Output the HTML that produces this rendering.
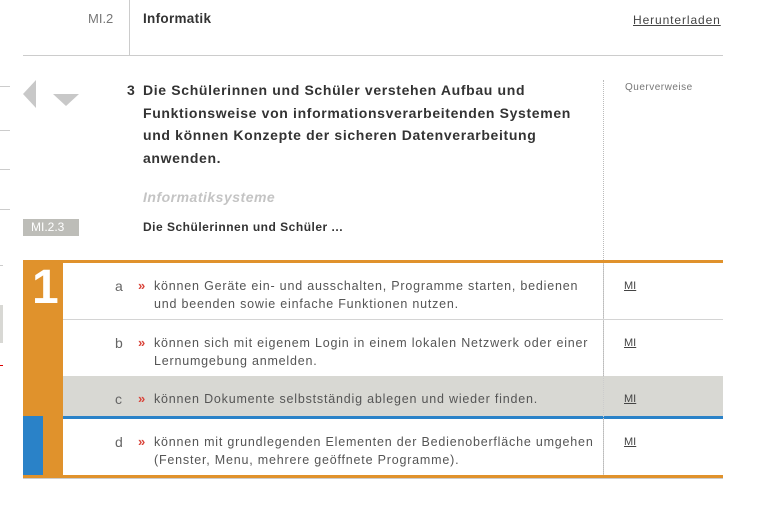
<!DOCTYPE html>
<html><head><meta charset="utf-8"><style>
*{margin:0;padding:0;box-sizing:border-box}
body{width:781px;height:521px;background:#fff;position:relative;overflow:hidden;font-family:"Liberation Sans",sans-serif;color:#333}
.a{position:absolute}
.item{position:absolute;left:63px;width:660px;font-size:12.5px;color:#555;letter-spacing:0.8px;line-height:18px}
.item .l{position:absolute;left:52px;top:14px;font-size:14px;color:#666}
.item .r{position:absolute;left:75px;top:14px;color:#d9443a;font-weight:bold;font-size:13px}
.item .t{position:absolute;left:91px;top:14px;white-space:nowrap}
.item .m{position:absolute;left:561px;top:14px;font-size:11px;text-decoration:underline;color:#444;letter-spacing:0}
</style></head><body>
<div class="a" style="left:88px;top:11px;font-size:13px;color:#777">MI.2</div>
<div class="a" style="left:129px;top:0;width:1px;height:55px;background:#ccc"></div>
<div class="a" style="left:143px;top:11px;font-size:13.5px;font-weight:bold;color:#333;letter-spacing:0.3px">Informatik</div>
<div class="a" style="left:633px;top:13px;font-size:12px;color:#444;text-decoration:underline;letter-spacing:0.9px">Herunterladen</div>
<div class="a" style="left:23px;top:55px;width:700px;height:1px;background:#ccc"></div>
<div class="a" style="left:0;top:86px;width:10px;height:1px;background:#ccc"></div>
<div class="a" style="left:0;top:130px;width:10px;height:1px;background:#ccc"></div>
<div class="a" style="left:0;top:169px;width:10px;height:1px;background:#ccc"></div>
<div class="a" style="left:0;top:209px;width:10px;height:1px;background:#ccc"></div>
<div class="a" style="left:0;top:265px;width:3px;height:1px;background:#ccc"></div>
<div class="a" style="left:0;top:305px;width:3px;height:38px;background:#d8d8d4"></div>
<div class="a" style="left:0;top:365px;width:3px;height:1px;background:#d00"></div>
<svg class="a" style="left:23px;top:80px" width="60" height="30"><polygon points="13,0 13,28 0,14" fill="#c8c8c8"/><polygon points="30,14 56,14 43,26" fill="#c8c8c8"/></svg>
<div class="a" style="left:127px;top:79px;font-size:14px;font-weight:bold;line-height:22.5px;color:#333">3</div>
<div class="a" style="left:143px;top:79px;font-size:14px;font-weight:bold;line-height:22.5px;color:#333;white-space:nowrap;letter-spacing:0.65px">Die Schülerinnen und Schüler verstehen Aufbau und<br>Funktionsweise von informationsverarbeitenden Systemen<br>und können Konzepte der sicheren Datenverarbeitung<br>anwenden.</div>
<div class="a" style="left:143px;top:189px;font-size:14px;font-weight:bold;font-style:italic;color:#c4c4c4;letter-spacing:0.5px">Informatiksysteme</div>
<div class="a" style="left:23px;top:219px;width:56px;height:17px;background:#bdbdb8;color:#fff;font-size:12px;padding-left:8px;line-height:17px">MI.2.3</div>
<div class="a" style="left:143px;top:220px;font-size:12px;font-weight:bold;color:#333;letter-spacing:0.5px">Die Schülerinnen und Schüler ...</div>
<div class="a" style="left:625px;top:82px;font-size:10px;color:#777;letter-spacing:0.5px">Querverweise</div>
<div class="a" style="left:603px;top:80px;width:0;height:398px;border-left:1px dotted #bbb"></div>
<div class="a" style="left:23px;top:260px;width:700px;height:3px;background:#e0922c"></div>
<div class="a" style="left:23px;top:260px;width:40px;height:218px;background:#e0922c"></div>
<div class="a" style="left:23px;top:416px;width:20px;height:62px;background:#2a82c8"></div>
<div class="a" style="left:32px;top:264px;font-size:48px;font-weight:bold;color:#fff;line-height:48px">1</div>
<div class="item" style="top:263px;height:56px"><span class="l">a</span><span class="r">»</span><span class="t">können Geräte ein- und ausschalten, Programme starten, bedienen<br>und beenden sowie einfache Funktionen nutzen.</span><span class="m">MI</span></div>
<div class="a" style="left:63px;top:319px;width:660px;height:1px;background:#d4d4d4"></div>
<div class="item" style="top:320px;height:56px"><span class="l">b</span><span class="r">»</span><span class="t">können sich mit eigenem Login in einem lokalen Netzwerk oder einer<br>Lernumgebung anmelden.</span><span class="m">MI</span></div>
<div class="item" style="top:376px;height:40px;background:#d8d8d3"><span class="l">c</span><span class="r">»</span><span class="t">können Dokumente selbstständig ablegen und wieder finden.</span><span class="m">MI</span></div>
<div class="a" style="left:63px;top:416px;width:660px;height:3px;background:#2a82c8"></div>
<div class="item" style="top:419px;height:56px"><span class="l">d</span><span class="r">»</span><span class="t">können mit grundlegenden Elementen der Bedienoberfläche umgehen<br>(Fenster, Menu, mehrere geöffnete Programme).</span><span class="m">MI</span></div>
<div class="a" style="left:603px;top:263px;width:0;height:212px;border-left:1px dotted #ccc"></div>
<div class="a" style="left:23px;top:475px;width:700px;height:3px;background:#e0922c"></div>
<div class="a" style="left:23px;top:478px;width:700px;height:1px;background:#ccc"></div>
</body></html>
